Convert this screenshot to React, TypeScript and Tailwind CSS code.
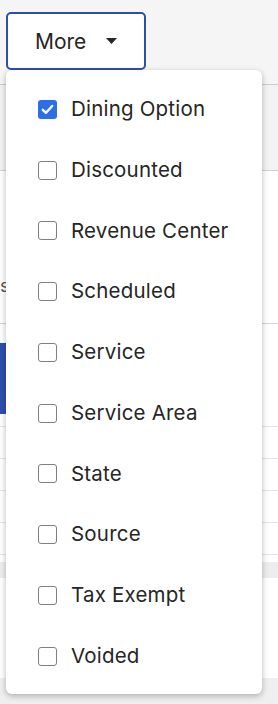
const items = [
  { label: "Dining Option", checked: true },
  { label: "Discounted", checked: false },
  { label: "Revenue Center", checked: false },
  { label: "Scheduled", checked: false },
  { label: "Service", checked: false },
  { label: "Service Area", checked: false },
  { label: "State", checked: false },
  { label: "Source", checked: false },
  { label: "Tax Exempt", checked: false },
  { label: "Voided", checked: false },
]

const Checkbox = ({ checked }: { checked: boolean }) => {
  if (checked) {
    return (
      <div className="w-[19px] h-[19px] rounded-[3px] bg-[#2d6ee6] flex items-center justify-center shrink-0">
        <svg width="13" height="11" viewBox="0 0 13 11" fill="none">
          <path d="M1.8 5.8 L5 8.8 L11.2 2" stroke="white" strokeWidth="2.4" strokeLinecap="round" strokeLinejoin="round" />
        </svg>
      </div>
    )
  }
  return <div className="w-[19px] h-[19px] rounded-[3px] border-[1.5px] border-[#808080] bg-white shrink-0" />
}

const App = () => {
  return (
    <div className="relative w-[278px] h-[704px] overflow-hidden bg-white text-[#262626] font-['Inter','Liberation_Sans',sans-serif]">
      {/* page behind the menu */}
      <div className="h-[84px] bg-[#f5f5f5] pl-[6px] pt-[12px]">
        <button className="w-[140px] h-[58px] border-2 border-[#2c4fad] rounded-[5px] bg-white flex items-center pl-[27px] gap-[20px]">
          <span className="text-[21px] leading-none text-[#262626]">More</span>
          <svg width="11" height="6" viewBox="0 0 11 6">
            <path d="M0 0 H11 L5.5 6 Z" fill="#262626" />
          </svg>
        </button>
      </div>
      <div className="h-[86px] border-t border-[#cccccc] bg-[#f3f3f3]" />
      <div className="h-[153px] border-t border-[#d2d2d2] bg-white flex items-end pb-[24px]">
        <span className="text-[18px] text-[#555]">s</span>
      </div>
      <div className="h-[103px] border-t border-[#d6d6d6] bg-white pt-[19px]">
        <div className="w-[8px] h-[71px] bg-[#2c4fad]" />
      </div>
      <div className="h-[32px] border-t border-[#e4e4e4]" />
      <div className="h-[32px] border-t border-[#e4e4e4]" />
      <div className="h-[32px] border-t border-[#e4e4e4]" />
      <div className="h-[32px] border-t border-[#e4e4e4]" />
      <div className="h-[8px] border-t border-[#e4e4e4]" />
      <div className="h-[16px] bg-[#ededed]" />
      <div className="h-[100px] bg-white" />
      <div className="h-[30px] bg-[#efefef]" />

      {/* dropdown menu */}
      <div className="absolute left-[6px] top-[70px] w-[256px] h-[624px] bg-white rounded-[6px] shadow-[0_2px_6px_rgba(0,0,0,0.28)] py-[9px]">
        {items.map(item => (
          <div key={item.label} className="h-[60.75px] flex items-center pl-[32px] gap-[14px]">
            <Checkbox checked={item.checked} />
            <span className="text-[20.5px] leading-none tracking-[0.2px]">{item.label}</span>
          </div>
        ))}
      </div>
    </div>
  )
}

export default App
